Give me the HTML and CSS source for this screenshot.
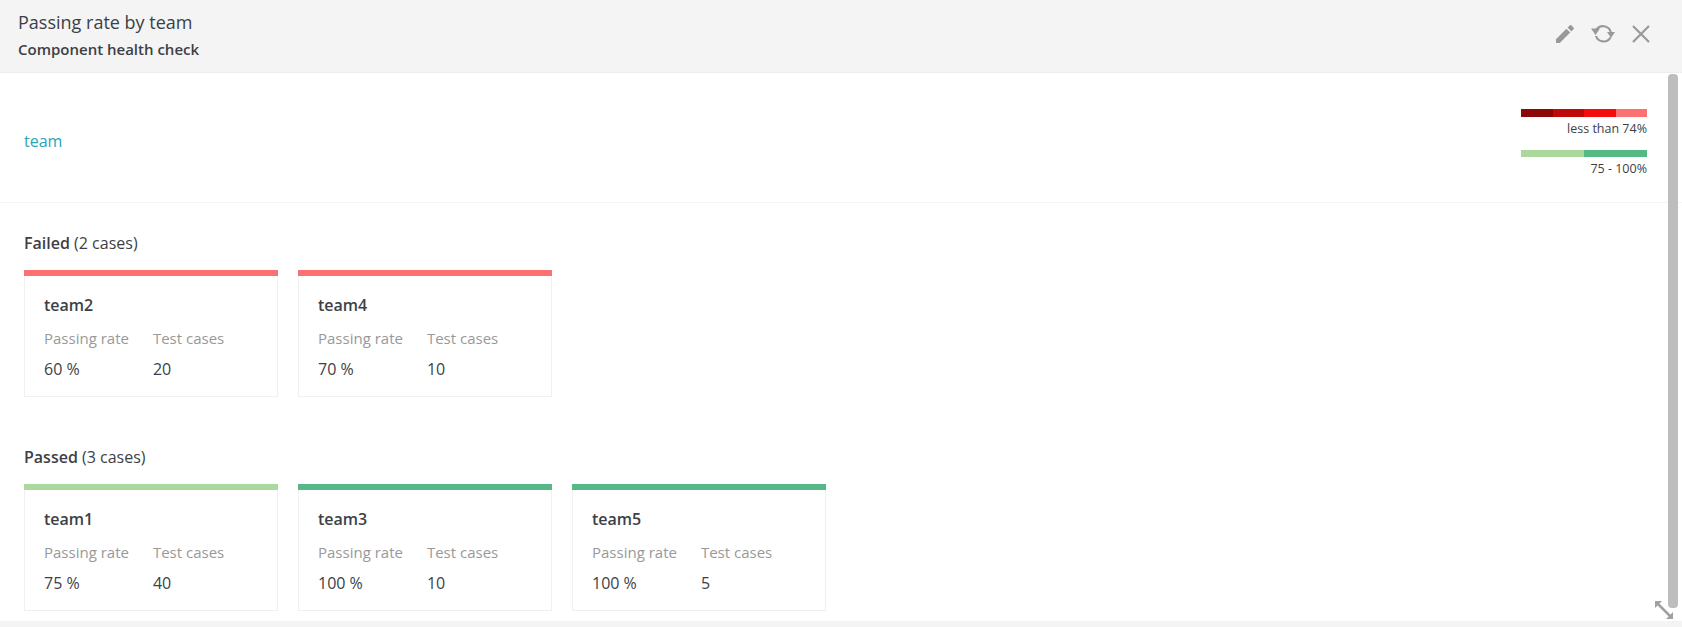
FILE: index.html
```html
<!DOCTYPE html>
<html lang="en">
<head>
<meta charset="utf-8">
<title>Passing rate by team</title>
<link rel="stylesheet" href="styles.css">
</head>
<body>
<div class="widget">
  <header class="head">
    <div class="head-text">
      <div class="title">Passing rate by team</div>
      <div class="subtitle">Component health check</div>
    </div>
    <div class="actions">
      <svg class="icon" width="20" height="20" viewBox="0 0 20 20"><path d="M1 15.200V19h3.800L15.200 8.600l-3.800-3.800L1 15.200zM18.700 5.100a1 1 0 0 0 0-1.400L16.300 1.300a1 1 0 0 0-1.400 0l-2.300 2.300 3.800 3.800 2.300-2.300z"/></svg>
      <svg class="icon" width="24" height="20" viewBox="0 0 24 20"><path class="stroke" d="M5 6.500A8 8 0 0 1 19.800 8M5 12A8 8 0 0 0 19.500 13.500"/><path d="M0 4.500h9L4.500 11zM16 8h8l-4 6z"/></svg>
      <svg class="icon" width="20" height="20" viewBox="0 0 20 20"><path class="stroke" d="M2 2l16 16M18 2L2 18"/></svg>
    </div>
  </header>
  <div class="scroller">
    <div class="filter">
      <a class="link">team</a>
      <div class="legend">
        <div class="bar">
          <i class="c-r1"></i><i class="c-r2"></i><i class="c-r3"></i><i class="c-r4"></i>
        </div>
        <div class="legend-label">less than 74%</div>
        <div class="bar bar-green">
          <i class="c-g1"></i><i class="c-g2"></i>
        </div>
        <div class="legend-label">75 - 100%</div>
      </div>
    </div>
    <section class="group">
      <h3 class="group-title"><b>Failed</b> (2 cases)</h3>
      <div class="cards">
        <div class="card">
          <div class="stripe c-r4"></div>
          <div class="card-body">
            <div class="name">team2</div>
            <div class="stats">
              <div class="stat"><span class="k">Passing rate</span><span class="v">60 %</span></div>
              <div class="stat"><span class="k">Test cases</span><span class="v">20</span></div>
            </div>
          </div>
        </div>
        <div class="card">
          <div class="stripe c-r4"></div>
          <div class="card-body">
            <div class="name">team4</div>
            <div class="stats">
              <div class="stat"><span class="k">Passing rate</span><span class="v">70 %</span></div>
              <div class="stat"><span class="k">Test cases</span><span class="v">10</span></div>
            </div>
          </div>
        </div>
      </div>
    </section>
    <section class="group group-second">
      <h3 class="group-title"><b>Passed</b> (3 cases)</h3>
      <div class="cards">
        <div class="card">
          <div class="stripe c-g1"></div>
          <div class="card-body">
            <div class="name">team1</div>
            <div class="stats">
              <div class="stat"><span class="k">Passing rate</span><span class="v">75 %</span></div>
              <div class="stat"><span class="k">Test cases</span><span class="v">40</span></div>
            </div>
          </div>
        </div>
        <div class="card">
          <div class="stripe c-g2"></div>
          <div class="card-body">
            <div class="name">team3</div>
            <div class="stats">
              <div class="stat"><span class="k">Passing rate</span><span class="v">100 %</span></div>
              <div class="stat"><span class="k">Test cases</span><span class="v">10</span></div>
            </div>
          </div>
        </div>
        <div class="card">
          <div class="stripe c-g2"></div>
          <div class="card-body">
            <div class="name">team5</div>
            <div class="stats">
              <div class="stat"><span class="k">Passing rate</span><span class="v">100 %</span></div>
              <div class="stat"><span class="k">Test cases</span><span class="v">5</span></div>
            </div>
          </div>
        </div>
      </div>
    </section>
    <div class="scrollbar"></div>
    <svg class="resize" width="20" height="20" viewBox="0 0 20 20"><path class="stroke-r" d="M4 4l12 12"/><path d="M1 1h7L1 8zM19 19h-7l7-7z"/></svg>
  </div>
</div>
</body>
</html>
```
FILE: styles.css
```css
* { box-sizing: border-box; }
html, body { margin: 0; height: 100%; background: #fff; overflow: hidden; }
body { font-family: "Open Sans", sans-serif; color: #3c3f47; font-size: 15px; }
.widget { height: 627px; display: flex; flex-direction: column; border-bottom: 6px solid #f4f4f4; }
.head { height: 73px; flex: none; background: #f4f4f4; border-bottom: 1px solid #ececec; display: flex; justify-content: space-between; padding: 10px 31px 0 18px; }
.title { font-size: 18px; line-height: 24px; font-weight: 400; }
.subtitle { font-size: 15px; line-height: 20px; margin-top: 5px; font-weight: 600; }
.actions { display: flex; gap: 16px; align-items: center; height: 44px; margin-top: 2px; }
.icon { fill: #999; display: block; }
.stroke { fill: none; stroke: #999; stroke-width: 2.2; }
.scroller { position: relative; flex: 1; min-height: 0; overflow: hidden; }
.filter { height: 130px; border-bottom: 1px solid #f4f4f4; display: flex; justify-content: space-between; align-items: flex-start; padding: 36px 35px 0 24px; }
.link { color: #2ba3b8; font-size: 16px; line-height: 22px; margin-top: 21px; }
.legend { width: 126px; }
.bar { display: flex; height: 8px; }
.bar i { flex: 1; display: block; }
.bar-green { height: 7px; margin-top: 13px; }
.c-r1 { background: #8f0606; }
.c-r2 { background: #bf0a0a; }
.c-r3 { background: #f40d0d; }
.c-r4 { background: #fb7070; }
.c-g1 { background: #aad89d; }
.c-g2 { background: #55b885; }
.legend-label { font-size: 12.500px; line-height: 16px; text-align: right; margin-top: 4px; white-space: nowrap; }
.group { padding: 29px 24px 0; }
.group-second { padding-top: 49px; }
.group-title { margin: 0 0 16px; font-size: 16px; line-height: 22px; font-weight: 400; }
.group-title b { font-weight: 600; }
.cards { display: flex; gap: 20px; }
.card { width: 254px; height: 127px; display: flex; flex-direction: column; }
.stripe { height: 6px; flex: none; }
.card-body { flex: 1; border: 1px solid #f0f0f0; border-top: none; padding: 17px 19px 0; }
.name { font-size: 16px; line-height: 24px; font-weight: 600; }
.stats { display: flex; gap: 24px; margin-top: 11px; }
.stat { display: flex; flex-direction: column; }
.k { color: #999; font-size: 15px; line-height: 20px; }
.v { font-size: 16px; line-height: 22px; margin-top: 10px; }
.scrollbar { position: absolute; right: 4px; top: 1px; width: 10px; height: 534px; border-radius: 4px; background: #bdbdbd; }
.resize { position: absolute; right: 8px; bottom: 1px; fill: #a0a0a0; }
.stroke-r { fill: none; stroke: #a0a0a0; stroke-width: 2.5; }
```
